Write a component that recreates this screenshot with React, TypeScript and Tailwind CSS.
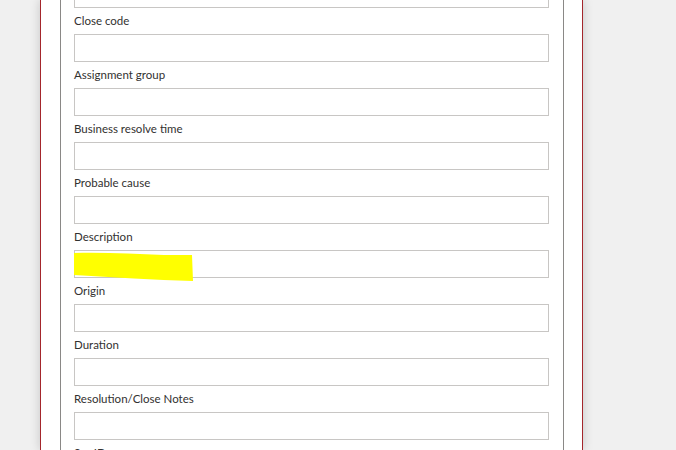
const fields = [
  "Close code",
  "Assignment group",
  "Business resolve time",
  "Probable cause",
  "Description",
  "Origin",
  "Duration",
  "Resolution/Close Notes",
  "Sys ID",
]

export default function App() {
  return (
    <div className="h-[450px] overflow-hidden bg-[#f0f0f0] font-['Segoe_UI','Lato',sans-serif] text-[11.5px] text-[#323130]">
      <div className="ml-[40px] h-full w-[543px] border-x border-[#a4262c] bg-white shadow-[0_0_10px_rgba(0,0,0,0.18)]">
        <div className="ml-[19px] h-full w-[504px] overflow-hidden border-x border-[#8a8886]">
          <div className="mt-[-20px] pl-[13px] pr-[14px]">
            {/* field above, scrolled out of view */}
            <div className="h-[28px] w-[475px] border border-[#c8c6c4] bg-white" />
            {fields.map((label) => (
              <div key={label} className="pt-[5px]">
                <div className="mb-[5px] h-4 leading-4">{label}</div>
                <div className="relative h-[28px] w-[475px] border border-[#c8c6c4] bg-white">
                  {label === "Description" && (
                    <svg className="absolute left-[-1px] top-[-1px]" width="120" height="32" viewBox="0 0 120 32">
                      <path d="M0 3 C30 2 60 4 90 5 L118 5 L119 31 C80 30 40 27 0 25 Z" fill="#ffff00" />
                    </svg>
                  )}
                </div>
              </div>
            ))}
          </div>
        </div>
      </div>
    </div>
  )
}
